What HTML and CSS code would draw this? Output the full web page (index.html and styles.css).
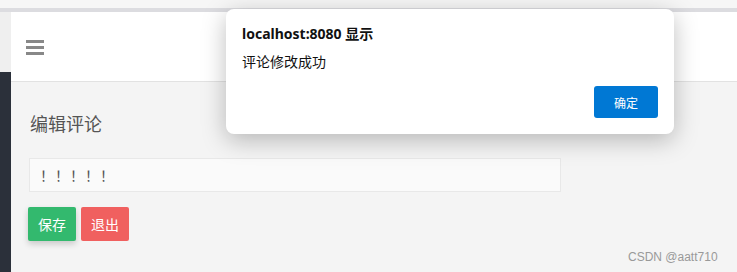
FILE: index.html
```html
<!DOCTYPE html>
<html lang="zh-CN">
<head>
    <meta charset="UTF-8">
    <title>编辑评论</title>
    <link rel="stylesheet" href="styles.css">
</head>
<body>
    <div class="top-strip"></div>
    <div class="app">
        <aside class="sidebar">
            <div class="sidebar-top"></div>
            <div class="sidebar-dark"></div>
        </aside>
        <div class="content">
            <header class="topbar">
                <span class="burger"><i></i><i></i><i></i></span>
            </header>
            <main class="page">
                <h2 class="page-title">编辑评论</h2>
                <div class="comment-input">！！！！！</div>
                <div class="actions">
                    <button class="btn btn-save">保存</button>
                    <button class="btn btn-quit">退出</button>
                </div>
            </main>
        </div>
    </div>

    <!-- browser alert -->
    <div class="alert">
        <div class="alert-title">localhost:8080 显示</div>
        <div class="alert-msg">评论修改成功</div>
        <div class="alert-foot">
            <button class="alert-ok">确定</button>
        </div>
    </div>

    <div class="watermark">CSDN @aatt710</div>
</body>
</html>
```

FILE: styles.css
```css
* {
    margin: 0;
    padding: 0;
    box-sizing: border-box;
}

body {
    font-family: "Noto Sans CJK SC", sans-serif;
    background-color: #f4f4f4;
    color: #555;
    width: 737px;
    height: 272px;
    overflow: hidden;
}

.top-strip {
    height: 12px;
    background-color: #f6f6f6;
    border-bottom: 4px solid #dcdce0;
}

.app {
    display: flex;
    height: 260px;
}

/* Sidebar */
.sidebar {
    width: 11px;
    display: flex;
    flex-direction: column;
}

.sidebar-top {
    height: 60px;
    background-color: #efefef;
}

.sidebar-dark {
    flex: 1;
    background-color: #2b303a;
}

.content {
    flex: 1;
    display: flex;
    flex-direction: column;
}

/* Header */
.topbar {
    height: 70px;
    background-color: #fff;
    border-bottom: 1px solid #e2e2e2;
    display: flex;
    align-items: center;
    padding-left: 15px;
}

.burger {
    display: flex;
    flex-direction: column;
    gap: 3px;
    margin-top: 1px;
}

.burger i {
    display: block;
    width: 18px;
    height: 3px;
    background-color: #888;
}

/* Page */
.page {
    flex: 1;
    padding: 26px 20px 0 18px;
    background-color: #f4f4f4;
}

.page-title {
    font-size: 18px;
    font-weight: normal;
    color: #555;
    line-height: 30px;
    margin-left: 1px;
}

.comment-input {
    margin-top: 20px;
    width: 532px;
    height: 34px;
    background-color: #fafafa;
    border: 1px solid #e8e8e8;
    padding-left: 10px;
    font-size: 14px;
    line-height: 32px;
    color: #555;
    letter-spacing: 1px;
}

.actions {
    display: flex;
    gap: 5px;
    margin-top: 15px;
    margin-left: -1px;
}

.btn {
    width: 48px;
    height: 34px;
    border: none;
    border-radius: 2px;
    color: #fff;
    font-family: "Noto Sans CJK SC", sans-serif;
    font-size: 14px;
}

.btn-save {
    background-color: #33b96e;
    box-shadow: 0 3px 6px rgba(0, 0, 0, 0.18);
}

.btn-quit {
    background-color: #f0605f;
}

/* Alert dialog */
.alert {
    position: absolute;
    left: 226px;
    top: 9px;
    width: 448px;
    height: 125px;
    background-color: #fff;
    border-radius: 8px;
    box-shadow: 0 6px 24px rgba(0, 0, 0, 0.26);
    padding: 15px 16px 0 16px;
    color: #111;
}

.alert-title {
    font-family: "Noto Sans", "Noto Sans CJK SC", sans-serif;
    font-weight: bold;
    font-size: 14px;
    line-height: 20px;
}

.alert-msg {
    font-size: 14px;
    line-height: 20px;
    margin-top: 7px;
}

.alert-foot {
    display: flex;
    justify-content: flex-end;
    margin-top: 15px;
}

.alert-ok {
    width: 64px;
    height: 32px;
    border: none;
    border-radius: 3px;
    background-color: #0078d4;
    color: #fff;
    font-family: "Noto Sans CJK SC", sans-serif;
    font-size: 12px;
}

.watermark {
    position: absolute;
    left: 628px;
    top: 250px;
    font-family: "Liberation Sans", sans-serif;
    font-size: 12px;
    color: #999;
}
```
